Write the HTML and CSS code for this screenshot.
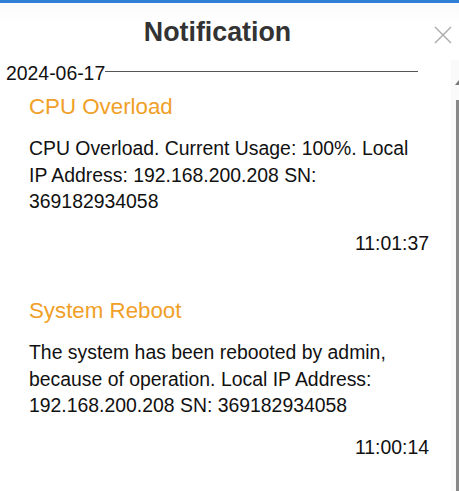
FILE: index.html
```html
<!DOCTYPE html>
<html>
<head>
<meta charset="utf-8">
<link rel="stylesheet" href="styles.css">
</head>
<body>
<div class="topbar"></div>
<div class="header">
  <h1 class="title">Notification</h1>
  <span class="close">
    <svg width="18" height="18" viewBox="0 0 18 18"><path d="M1 1 L17 17 M17 1 L1 17" stroke="#aaa" stroke-width="1.4" fill="none"/></svg>
  </span>
</div>
<div class="body">
  <div class="list">
    <div class="date-row"><span class="date">2024-06-17</span><span class="rule"></span></div>
    <div class="item">
      <div class="item-title">CPU Overload</div>
      <div class="item-text">CPU Overload. Current Usage: 100%. Local IP Address: 192.168.200.208 SN: 369182934058</div>
      <div class="item-time">11:01:37</div>
    </div>
    <div class="item">
      <div class="item-title">System Reboot</div>
      <div class="item-text">The system has been rebooted by admin, because of operation. Local IP Address: 192.168.200.208 SN: 369182934058</div>
      <div class="item-time">11:00:14</div>
    </div>
  </div>
  <div class="scrollbar">
    <span class="arrow"></span>
    <span class="thumb"></span>
  </div>
</div>
</body>
</html>
```
FILE: styles.css
```css
html, body { margin: 0; padding: 0; background: #fff; }
body { font-family: "Liberation Sans", Arial, sans-serif; color: #111; width: 459px; height: 491px; overflow: hidden; }
.topbar { height: 3px; background: #2f7fd6; }
.header { position: relative; height: 57px; display: flex; justify-content: center; align-items: center; background: linear-gradient(#fafafa, #fff 20px); }
.title { margin: 0; font-size: 26.8px; font-weight: bold; color: #333; padding-right: 24px; padding-top: 2px; }
.close { position: absolute; right: 7px; top: 23px; }
.body { display: flex; height: 431px; }
.list { flex: 1; padding-left: 6px; }
.date-row { display: flex; align-items: center; height: 26px; }
.date { font-size: 19.4px; }
.rule { width: 313px; height: 1px; background: #555; margin-top: -4px; }
.item { padding-left: 23px; padding-right: 22px; }
.item-title { font-size: 22.3px; color: #f0a028; margin-top: 6px; line-height: 30px; }
.item-text { font-size: 19.4px; line-height: 26.5px; margin-top: 13px; }
.item-time { font-size: 19.4px; text-align: right; margin-top: 15.5px; line-height: 26px; margin-bottom: 40px; }
.scrollbar { width: 8px; position: relative; background: #fafafa; }
.arrow { position: absolute; right: 0; top: 20px; width: 0; height: 0; border-left: 4px solid transparent; border-bottom: 5px solid #777; }
.thumb { position: absolute; right: 0; top: 40px; bottom: 0; width: 3px; background: #888; }
```
